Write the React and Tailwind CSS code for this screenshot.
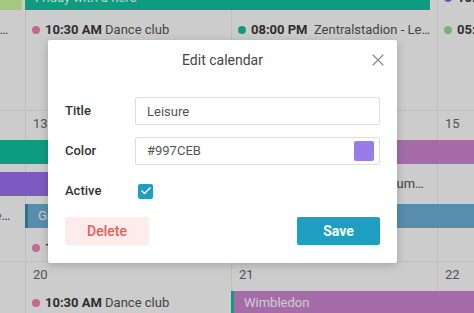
import React from "react";
import { X, Check } from "lucide-react";

// one event line with a coloured dot, as in the month view
function Dot({ color, time, title, className = "", pr = "pr-[13px]" }) {
    return (
        <div className={`flex items-center h-[24px] pl-[7px] text-[13px] min-w-0 ${pr} ${className}`}>
            <span className="w-2 h-2 rounded-full shrink-0" style={{ backgroundColor: color }} />
            <span className="ml-[5px] truncate text-[#555]">
                <span className="font-bold text-[#3a3a3a]">{time}</span> {title}
            </span>
        </div>
    );
}

function Bar({ className = "", children }) {
    return (
        <div className={`h-[24px] flex items-center px-[10px] text-[13px] text-white truncate min-w-0 ${className}`}>
            {children}
        </div>
    );
}

function Week({ days, height, children }) {
    return (
        <div
            className={`grid grid-cols-[206px_206px_206px_206px] grid-rows-[21px_24px_24px_24px_24px_1fr] gap-y-2 border-b border-[#efefef] ${height}`}
        >
            {days.map((d, i) => (
                <div
                    key={d}
                    className={`row-span-full border-l border-[#efefef] pl-[7px] pt-[5px] text-[13px] leading-[16px] text-[#6a6a6a] ${
                        ["col-start-1", "col-start-2", "col-start-3", "col-start-4"][i]
                    }`}
                >
                    {d}
                </div>
            ))}
            {children}
        </div>
    );
}

export default function App() {
    return (
        <div className="relative w-[474px] h-[313px] overflow-hidden bg-white font-['Roboto',sans-serif]">
            {/* calendar */}
            <div className="-ml-[181px] -mt-[43px] w-[824px]">
                <Week days={["5", "6", "7", "8"]} height="h-[154px]">
                    <Bar className="col-start-1 row-start-2 mr-[3px] bg-[#cff99e]">Soccer training</Bar>
                    <Bar className="col-start-2 col-span-2 row-start-2 mr-[7px] bg-[#12c4a0]">Friday with a hero</Bar>
                    <Dot className="col-start-4 row-start-2" color="#8a64ee" time="10:00 AM" title="Brunch" />
                    <Dot className="col-start-1 row-start-3" color="#6eb2d7" time="09:00 AM" title="Team meeting at the office" />
                    <Dot className="col-start-2 row-start-3" color="#f483b5" time="10:30 AM" title="Dance club" />
                    <Dot
                        className="col-start-3 row-start-3"
                        pr="pr-[6px]"
                        color="#12c4a0"
                        time="08:00 PM"
                        title={"\u00a0Zentralstadion - Le…"}
                    />
                    <Dot className="col-start-4 row-start-3" color="#96e196" time="05:00 PM" title="Yoga" />
                </Week>
                <Week days={["12", "13", "14", "15"]} height="h-[151px]">
                    <Bar className="col-start-1 col-span-2 row-start-2 bg-[#12c4a0]">Summer holiday</Bar>
                    <Bar className="col-start-3 col-span-2 row-start-2 bg-[#cf87d4]">Wimbledon</Bar>
                    <Bar className="col-start-1 col-span-2 row-start-3 mr-[7px] bg-[#9b72f0]">Road trip</Bar>
                    <Dot className="col-start-3 row-start-3" pr="pr-[6px]" color="#12c4a0" time="06:00 PM" title="Wembley Stadium…" />
                    <Dot className="col-start-1 row-start-4" color="#6eb2d7" time="02:00 PM" title="Product review session" />
                    <Bar className="col-start-2 col-span-3 row-start-4 border-l-[3px] border-[#3a8fa6] bg-[#6eb2d7]">Gamescom</Bar>
                    <Dot className="col-start-2 row-start-5" color="#f483b5" time="10:30 AM" title="Dance club" />
                </Week>
                <Week days={["19", "20", "21", "22"]} height="h-[151px]">
                    <Dot className="col-start-2 row-start-2" color="#f483b5" time="10:30 AM" title="Dance club" />
                    <Bar className="col-start-3 col-span-2 row-start-2 border-l-[3px] border-[#12c4a0] bg-[#cf87d4]">Wimbledon</Bar>
                </Week>
            </div>

            {/* dim */}
            <div className="absolute inset-0 bg-black/20" />

            {/* dialog */}
            <div className="absolute left-[48px] top-[40px] w-[349px] bg-white rounded-[2px] shadow-[0_2px_10px_rgba(0,0,0,0.2)]">
                <div className="grid grid-cols-[1fr_auto_1fr] items-center h-[40px]">
                    <div />
                    <div className="text-[14px] text-[#444]">Edit calendar</div>
                    <div className="flex justify-end pr-[9px]">
                        <X size={20} strokeWidth={1.4} className="text-[#888]" />
                    </div>
                </div>

                <div className="px-[17px] pt-[17px] pb-[18px]">
                    <div className="flex items-center">
                        <label className="w-[70px] text-[13px] font-medium text-[#333]">Title</label>
                        <input
                            readOnly
                            value="Leisure"
                            className="flex-1 h-[28px] border border-[#dedede] rounded-[2px] px-[11px] text-[13px] text-[#555] outline-none"
                        />
                    </div>

                    <div className="flex items-center mt-[12px]">
                        <label className="w-[70px] text-[13px] font-medium text-[#333]">Color</label>
                        <div className="flex-1 h-[28px] border border-[#dedede] rounded-[2px] pl-[11px] pr-[5px] flex items-center">
                            <input readOnly value="#997CEB" className="flex-1 min-w-0 text-[13px] text-[#555] outline-none" />
                            <div className="w-[20px] h-[20px] rounded-[2px] bg-[#997ceb]" />
                        </div>
                    </div>

                    <div className="flex items-center h-[20px] mt-[16px]">
                        <label className="w-[70px] text-[13px] font-medium text-[#333]">Active</label>
                        <div className="ml-[3px] w-[15px] h-[15px] rounded-[2px] bg-[#1f9fc0] flex items-center justify-center">
                            <Check size={12} strokeWidth={3} className="text-white" />
                        </div>
                    </div>

                    <div className="flex justify-between mt-[16px]">
                        <button className="w-[84px] h-[28px] rounded-[2px] bg-[#fdecec] text-[14px] font-medium text-[#f25a5a]">
                            Delete
                        </button>
                        <button className="w-[83px] h-[28px] rounded-[2px] bg-[#1f9fc0] text-[14px] font-bold text-white">
                            Save
                        </button>
                    </div>
                </div>
            </div>
        </div>
    );
}
